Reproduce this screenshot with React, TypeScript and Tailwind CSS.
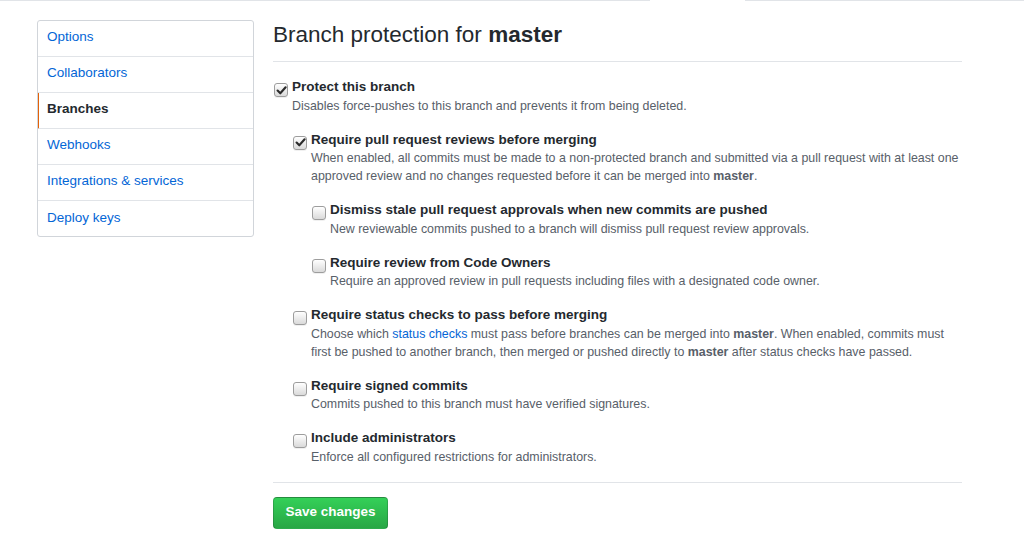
import React from "react";

function Box({ checked }: { checked?: boolean }) {
  return (
    <span className="mt-[6px] ml-px mr-[4px] flex h-[14px] w-[14px] shrink-0 items-center justify-center rounded-[3px] border border-[#9d9d9d] bg-gradient-to-b from-[#ffffff] to-[#dadada] shadow-[0_1px_0_rgba(0,0,0,0.06)]">
      {checked && (
        <svg width="11" height="11" viewBox="0 0 11 11">
          <path d="M1.6 5.6 L4.3 8.3 L9.6 2.3" fill="none" stroke="#2b2b2b" strokeWidth="2.1" strokeLinecap="round" strokeLinejoin="round" />
        </svg>
      )}
    </span>
  );
}

function Item({
  checked,
  label,
  children,
  desc,
}: {
  checked?: boolean;
  label: string;
  desc: React.ReactNode;
  children?: React.ReactNode;
}) {
  return (
    <div className="flex">
      <Box checked={checked} />
      <div className="flex-1">
        <div className="text-[13.5px] font-bold leading-[19.5px] text-[#24292e]">{label}</div>
        <div className="whitespace-nowrap text-[12.4px] leading-[18px] text-[#586069]">{desc}</div>
        {children && <div className="mt-[15px] flex flex-col gap-[15px]">{children}</div>}
      </div>
    </div>
  );
}

const nav = ["Options", "Collaborators", "Branches", "Webhooks", "Integrations & services", "Deploy keys"];

export default function App() {
  return (
    <div className="h-[550px] w-[1024px] overflow-hidden bg-white font-['Liberation_Sans',Arial,sans-serif]">
      <div className="flex h-px">
        <div className="w-[650px] bg-[#e1e4e8]" />
        <div className="w-[95px]" />
        <div className="flex-1 bg-[#e1e4e8]" />
      </div>
      <div className="flex pt-[19px]">
        <div className="ml-[37px] h-[217px] w-[217px] overflow-hidden rounded-[3px] border border-[#d1d5da]">
          {nav.map((n, i) => {
            const sel = n === "Branches";
            const last = i === nav.length - 1;
            return (
              <div
                key={n}
                className={
                  "flex h-[36px] items-center pb-[2px] text-[13.5px] " +
                  (last ? "h-[35px] " : "border-b border-[#e1e4e8] ") +
                  (sel
                    ? "-ml-px border-l-2 border-l-[#e36209] pl-[8px] font-bold text-[#24292e]"
                    : "pl-[9px] text-[#0366d6]")
                }
              >
                {n}
              </div>
            );
          })}
        </div>
        <div className="ml-[19px] w-[689px]">
          <div className="border-b border-[#e1e4e8] pb-[11px]">
            <h1 className="text-[22.5px] font-normal leading-[30px] text-[#24292e]">
              Branch protection for <b className="font-bold">master</b>
            </h1>
          </div>
          <div className="mt-[15px]">
            <Item checked label="Protect this branch" desc="Disables force-pushes to this branch and prevents it from being deleted.">
              <Item
                checked
                label="Require pull request reviews before merging"
                desc={
                  <>
                    When enabled, all commits must be made to a non-protected branch and submitted via a pull request with at least one
                    <br />
                    approved review and no changes requested before it can be merged into <b>master</b>.
                  </>
                }
              >
                <Item
                  label="Dismiss stale pull request approvals when new commits are pushed"
                  desc="New reviewable commits pushed to a branch will dismiss pull request review approvals."
                />
                <Item
                  label="Require review from Code Owners"
                  desc="Require an approved review in pull requests including files with a designated code owner."
                />
              </Item>
              <Item
                label="Require status checks to pass before merging"
                desc={
                  <>
                    Choose which <span className="text-[#0366d6]">status checks</span> must pass before branches can be merged into{" "}
                    <b>master</b>. When enabled, commits must
                    <br />
                    first be pushed to another branch, then merged or pushed directly to <b>master</b> after status checks have passed.
                  </>
                }
              />
              <Item label="Require signed commits" desc="Commits pushed to this branch must have verified signatures." />
              <Item label="Include administrators" desc="Enforce all configured restrictions for administrators." />
            </Item>
          </div>
          <div className="mt-[16px] border-t border-[#e1e4e8] pt-[14px]">
            <button className="h-[32px] w-[115px] rounded-[4px] border border-[rgba(27,31,35,0.2)] bg-gradient-to-b from-[#34d058] to-[#28a745] text-[13.5px] font-bold text-white">
              Save changes
            </button>
          </div>
        </div>
      </div>
    </div>
  );
}
